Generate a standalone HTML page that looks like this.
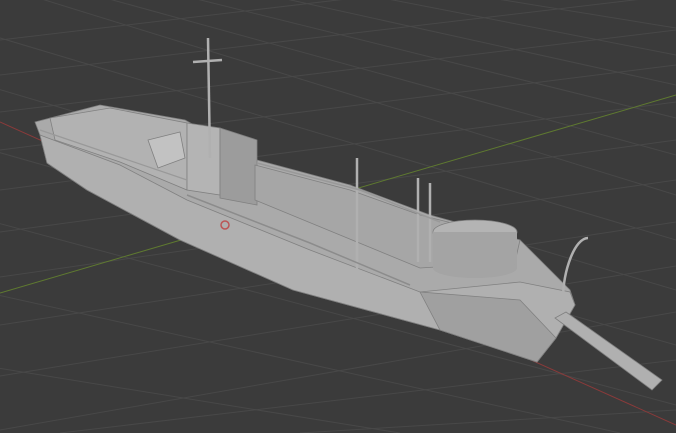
<!DOCTYPE html>
<html><head><style>html,body{margin:0;padding:0;background:#3b3b3b;overflow:hidden}svg{display:block}</style></head><body>
<svg width="676" height="433" viewBox="0 0 676 433" xmlns="http://www.w3.org/2000/svg">
<rect width="676" height="433" fill="#3b3b3b"/>
<g stroke="#484848" stroke-width="1">
<path d="M0 40L676 -40M0 75L676 -5M0 112L676 30M0 150L676 65M0 190L676 102M0 232L676 140M0 277L676 180M0 325L676 222M0 376L676 266M0 430L676 312M60 433L676 360M300 433L676 410"/>
<path d="M-100 60L676 290M-60 20L676 240M-20 -20L676 195M40 -20L676 155M120 -20L676 118M200 -20L676 85M290 -20L676 55M380 -20L676 28M-150 110L676 345M-200 170L676 405M-250 240L620 433M-300 320L400 433"/>
</g>
<line x1="0" y1="122" x2="676" y2="425" stroke="#8a3a3a" stroke-width="1"/>
<line x1="0" y1="293" x2="676" y2="95" stroke="#5f7a30" stroke-width="1"/>
<g fill="#a9a9a9" stroke="#808080" stroke-width="0.8">
<polygon points="35,122 100,105 185,120 257,160 350,185 430,215 520,240 570,290 575,305 556,338 537,362 440,330 293,290 180,240 87,190 47,163 40,135" fill="#aaaaaa"/>
<polygon points="40,135 120,165 187,200 310,250 420,292 520,282 570,292 575,305 556,338 537,362 440,330 293,290 180,240 87,190 47,163" fill="#b0b0b0"/>
<polygon points="420,292 440,330 537,362 556,338 520,300" fill="#a0a0a0"/>
<polygon points="50,118 110,108 187,123 187,190 120,162 55,140" fill="#b2b2b2"/>
<polygon points="187,123 220,128 220,195 187,190" fill="#b4b4b4"/>
<polygon points="220,128 257,140 257,205 220,198" fill="#9c9c9c"/>
<polygon points="255,165 350,190 420,215 520,240 515,262 420,268 255,200" fill="#a6a6a6"/>
<ellipse cx="475" cy="232" rx="42" ry="12" fill="#b4b4b4"/>
<rect x="433" y="232" width="84" height="36" fill="#a4a4a4" stroke="none"/>
<ellipse cx="475" cy="268" rx="42" ry="10" fill="#a4a4a4" stroke="none"/>
<polygon points="148,140 180,132 185,158 158,168" fill="#c2c2c2"/>
<polygon points="555,318 566,312 662,380 652,390" fill="#b0b0b0"/>
</g>
<g stroke="#b0b0b0" stroke-width="2.5" fill="none">
<line x1="208" y1="38" x2="210" y2="158"/>
<line x1="193" y1="62" x2="222" y2="60"/>
<line x1="357" y1="158" x2="357" y2="282"/>
<line x1="418" y1="178" x2="418" y2="262"/>
<line x1="430" y1="183" x2="430" y2="262"/>
<path d="M563 300C563 270 575 238 588 238"/>
<path d="M187 195L310 243L410 285" stroke="#8c8c8c" stroke-width="1.5"/>
<path d="M257 163L360 190L440 222" stroke="#999" stroke-width="1.5"/>
<path d="M40 130L187 180" stroke="#999" stroke-width="1.2"/>
</g>
<circle cx="225" cy="225" r="4" fill="none" stroke="#b55" stroke-width="1.5"/>
</svg>
</body></html>
